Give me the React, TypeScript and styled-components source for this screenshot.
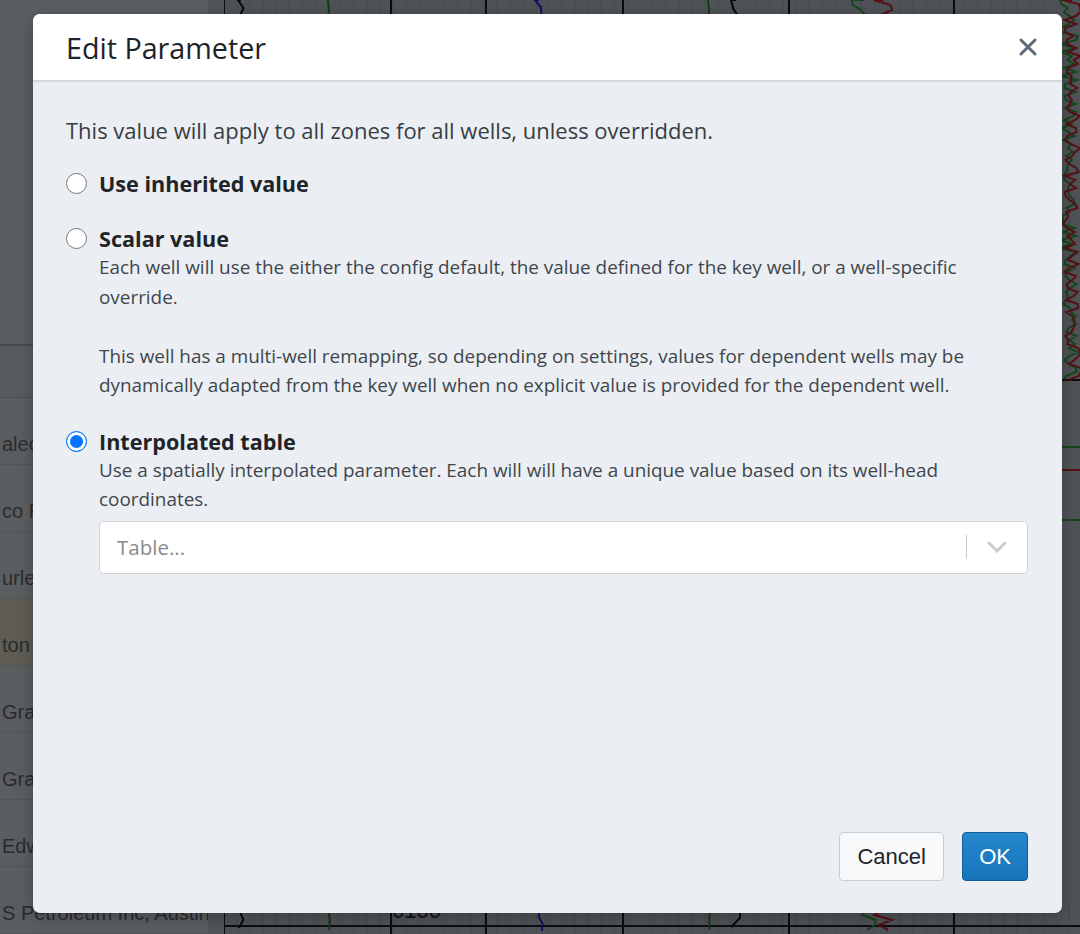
import React, { useMemo } from "react";
import styled, { createGlobalStyle } from "styled-components";

const GlobalStyle = createGlobalStyle`
  html, body {
    margin: 0;
    padding: 0;
    height: 100%;
    overflow: hidden;
  }
  body {
    font-family: "Open Sans", "Noto Sans", sans-serif;
  }
  #root {
    height: 100%;
  }
`;

const Page = styled.div`
  position: relative;
  width: 100vw;
  height: 100vh;
  display: flex;
  background: #9ea6ae;
  overflow: hidden;
`;

/* ---------- background app (behind the dim overlay) ---------- */

const Sidebar = styled.aside`
  width: 208px;
  flex: none;
  display: flex;
  flex-direction: column;
  background: #b6bcc2;
`;

const SidebarTop = styled.div`
  height: 344px;
  border-bottom: 2px solid #8f959b;
`;

const TableHead = styled.div`
  height: 51px;
  border-bottom: 1px solid #9aa0a6;
  background: #b3b9bf;
`;

const TableRow = styled.div<{ $active?: boolean }>`
  height: 67px;
  box-sizing: border-box;
  border-bottom: 1px solid #a2a8ae;
  background: ${(p) => (p.$active ? "#bcb8a6" : "#b6bcc2")};
  padding: 35px 0 0 2px;
  font-family: "Liberation Sans", Arial, sans-serif;
  font-size: 20px;
  color: #52585e;
  white-space: nowrap;
  overflow: hidden;
`;

const Gutter = styled.div`
  width: 16px;
  flex: none;
  background: #a3a9af;
`;

const ChartArea = styled.div`
  flex: 1;
  position: relative;
  background: #9ea6ae;
  svg {
    display: block;
  }
`;

const Overlay = styled.div`
  position: absolute;
  inset: 0;
  background: rgba(0, 0, 0, 0.5);
  display: flex;
  align-items: flex-start;
  padding: 14px 0 0 33px;
  box-sizing: border-box;
`;

/* ---------- modal ---------- */

const Modal = styled.div`
  width: 1029px;
  height: 899px;
  display: flex;
  flex-direction: column;
  border-radius: 7px;
  overflow: hidden;
  background: #ebeff3;
  box-shadow: 0 4px 16px rgba(0, 0, 0, 0.25);
`;

const Header = styled.header`
  height: 66px;
  flex: none;
  background: #fff;
  border-bottom: 2px solid #d3d8dd;
  display: flex;
  align-items: center;
  justify-content: space-between;
  padding: 0 24px 0 33px;
`;

const Title = styled.h5`
  margin: 0;
  font-size: 28.7px;
  font-weight: 400;
  color: #1d2329;
`;

const CloseButton = styled.button`
  border: none;
  background: none;
  padding: 0;
  width: 20px;
  height: 20px;
  display: flex;
  align-items: center;
  justify-content: center;
  cursor: pointer;
`;

const Body = styled.div`
  flex: 1;
  display: flex;
  flex-direction: column;
  padding: 34px 34px 32px 33px;
`;

const Intro = styled.p`
  margin: 0 0 24px;
  font-size: 22px;
  line-height: 29px;
  color: #383d42;
`;

const OptionList = styled.div`
  display: flex;
  flex-direction: column;
  gap: 26px;
`;

const Option = styled.label`
  display: grid;
  grid-template-columns: 21px 1fr;
  column-gap: 12px;
  align-items: start;
`;

const Radio = styled.input.attrs({ type: "radio" })`
  appearance: none;
  width: 21px;
  height: 21px;
  margin: 4px 0 0;
  box-sizing: border-box;
  border-radius: 50%;
  border: 1px solid #767676;
  background: #fff;
  &:checked {
    border: 1.5px solid #0075ff;
    background: #0075ff;
    box-shadow: inset 0 0 0 3px #fff;
  }
`;

const OptionText = styled.div`
  display: flex;
  flex-direction: column;
`;

const OptionLabel = styled.span`
  font-size: 21.6px;
  font-weight: 700;
  line-height: 29px;
  color: #1f2428;
`;

const Desc = styled.p`
  margin: 0;
  font-size: 18.9px;
  line-height: 29.5px;
  color: #40464c;
  & + & {
    margin-top: 29.5px;
  }
`;

const Select = styled.div`
  margin-top: 6px;
  height: 53px;
  box-sizing: border-box;
  border: 1px solid #cfd3d7;
  border-radius: 5px;
  background: #fff;
  display: flex;
  align-items: center;
  padding-left: 17px;
`;

const Placeholder = styled.span`
  flex: 1;
  font-size: 20.5px;
  color: #8a8a8a;
`;

const Separator = styled.span`
  width: 1px;
  height: 24px;
  background: #cccccc;
`;

const Chevron = styled.span`
  display: flex;
  padding: 0 20px 0 20px;
`;

const Footer = styled.div`
  margin-top: auto;
  display: flex;
  justify-content: flex-end;
  gap: 18px;
`;

const Button = styled.button<{ $primary?: boolean }>`
  height: 49px;
  box-sizing: border-box;
  padding: 0 16px;
  font-family: "Liberation Sans", Arial, sans-serif;
  font-size: 22px;
  border-radius: 4px;
  cursor: pointer;
  border: 1px solid ${(p) => (p.$primary ? "#125d96" : "#c9ced3")};
  color: ${(p) => (p.$primary ? "#fff" : "#212529")};
  background: ${(p) =>
    p.$primary ? "linear-gradient(#2587cc, #1774bb)" : "#f8f9fa"};
  min-width: ${(p) => (p.$primary ? "65px" : "105px")};
`;

/* ---------- chart drawing ---------- */

function rng(seed: number) {
  let s = seed;
  return () => {
    s = (s * 16807) % 2147483647;
    return (s - 1) / 2147483646;
  };
}

function wiggle(x0: number, amp: number, seed: number, y0: number, y1: number, step = 4) {
  const r = rng(seed);
  let d = `M${x0} ${y0}`;
  for (let y = y0; y <= y1; y += step) {
    d += ` L${(x0 + (r() - 0.5) * 2 * amp).toFixed(1)} ${y}`;
  }
  return d;
}

const majors = [0, 167, 262, 399, 565, 730];

function WellChart() {
  const curves = useMemo(
    () => [
      { d: wiggle(17, 3, 7, 0, 934, 8), c: "#111" },
      { d: wiggle(105, 1, 11, 0, 934, 10), c: "#1f7a2c" },
      { d: wiggle(315, 4, 13, 0, 934, 7), c: "#1b22b8" },
      { d: wiggle(512, 5, 17, 0, 934, 9), c: "#111" },
      { d: wiggle(485, 1, 19, 0, 934, 10), c: "#1f7a2c" },
      { d: wiggle(640, 12, 23, 0, 934, 5), c: "#2c8a36" },
      { d: wiggle(660, 10, 29, 0, 934, 5), c: "#b0202a" },
      { d: wiggle(845, 9, 31, 0, 380, 4), c: "#2c8a36" },
      { d: wiggle(848, 9, 37, 0, 380, 4), c: "#b0202a" },
    ],
    []
  );
  const minors: number[] = [];
  for (let x = 0; x < 860; x += 13) minors.push(x);
  return (
    <svg width="856" height="934" viewBox="0 0 856 934">
      {minors.map((x) => (
        <line key={x} x1={x} y1={0} x2={x} y2={934} stroke="#8e969e" strokeWidth="1" />
      ))}
      {majors.map((x) => (
        <line key={`m${x}`} x1={x} y1={0} x2={x} y2={934} stroke="#1a1a1a" strokeWidth="2" />
      ))}
      <line x1={0} y1={926} x2={856} y2={926} stroke="#1a1a1a" strokeWidth="2" />
      <line x1={838} y1={380} x2={856} y2={380} stroke="#1a1a1a" strokeWidth="2" />
      <line x1={838} y1={447} x2={856} y2={447} stroke="#2c8a36" strokeWidth="2" />
      <line x1={838} y1={470} x2={856} y2={470} stroke="#b0202a" strokeWidth="2" />
      <line x1={838} y1={520} x2={856} y2={520} stroke="#2c8a36" strokeWidth="2" />
      {curves.map((c, i) => (
        <path key={i} d={c.d} fill="none" stroke={c.c} strokeWidth="2" />
      ))}
      <text x={168} y={918} fontFamily="Liberation Sans, Arial, sans-serif" fontSize="22" fill="#222">
        6100
      </text>
    </svg>
  );
}

const rows = [
  "aleco Energy",
  "co Resources",
  "urleson Oil Co",
  "ton Well Service",
  "Graham Oil",
  "Graham Oil",
  "Edwards Corp",
  "S Petroleum Inc, Austin",
];

export default function App() {
  return (
    <>
      <GlobalStyle />
      <Page>
        <Sidebar>
          <SidebarTop />
          <TableHead />
          {rows.map((r, i) => (
            <TableRow key={i} $active={i === 3}>
              {r}
            </TableRow>
          ))}
        </Sidebar>
        <Gutter />
        <ChartArea>
          <WellChart />
        </ChartArea>

        <Overlay>
          <Modal role="dialog">
            <Header>
              <Title>Edit Parameter</Title>
              <CloseButton aria-label="Close">
                <svg width="18" height="18" viewBox="0 0 18 18">
                  <path d="M2 2 L16 16 M16 2 L2 16" stroke="#5c6b79" strokeWidth="3" strokeLinecap="round" />
                </svg>
              </CloseButton>
            </Header>
            <Body>
              <Intro>This value will apply to all zones for all wells, unless overridden.</Intro>
              <OptionList>
                <Option>
                  <Radio name="mode" />
                  <OptionText>
                    <OptionLabel>Use inherited value</OptionLabel>
                  </OptionText>
                </Option>
                <Option>
                  <Radio name="mode" />
                  <OptionText>
                    <OptionLabel>Scalar value</OptionLabel>
                    <Desc>
                      Each well will use the either the config default, the value defined for the key well, or a
                      well-specific override.
                    </Desc>
                    <Desc>
                      This well has a multi-well remapping, so depending on settings, values for dependent wells may be
                      dynamically adapted from the key well when no explicit value is provided for the dependent well.
                    </Desc>
                  </OptionText>
                </Option>
                <Option>
                  <Radio name="mode" defaultChecked />
                  <OptionText>
                    <OptionLabel>Interpolated table</OptionLabel>
                    <Desc>
                      Use a spatially interpolated parameter. Each will will have a unique value based on its well-head
                      coordinates.
                    </Desc>
                    <Select>
                      <Placeholder>Table...</Placeholder>
                      <Separator />
                      <Chevron>
                        <svg width="20" height="12" viewBox="0 0 20 12">
                          <path d="M2 2 L10 10 L18 2" fill="none" stroke="#cccccc" strokeWidth="3" strokeLinecap="round" />
                        </svg>
                      </Chevron>
                    </Select>
                  </OptionText>
                </Option>
              </OptionList>
              <Footer>
                <Button>Cancel</Button>
                <Button $primary>OK</Button>
              </Footer>
            </Body>
          </Modal>
        </Overlay>
      </Page>
    </>
  );
}
